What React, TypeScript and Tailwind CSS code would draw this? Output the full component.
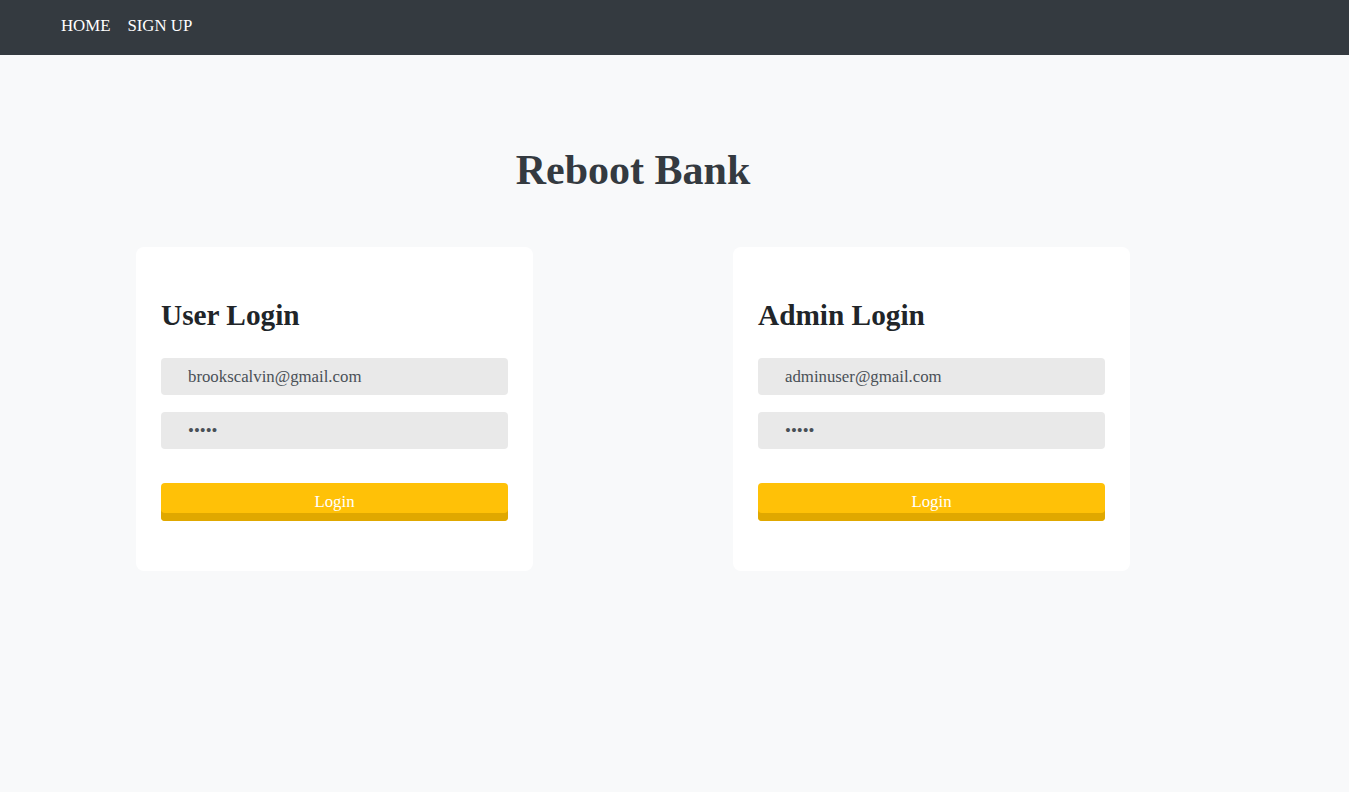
import React from "react";

const serif = { fontFamily: '"Liberation Serif", "Times New Roman", serif' };

function LoginCard({ title, email }: { title: string; email: string }) {
  return (
    <div className="w-[397px] bg-white rounded-[8px] px-[25px] pt-[51px] pb-[50px]">
      <h3 className="text-[29.3px] leading-[1.2] font-bold text-[#212529] m-0">{title}</h3>
      <div className="mt-[24px] flex flex-col">
        <input
          readOnly
          type="text"
          defaultValue={email}
          className="h-[37px] w-full rounded-[4px] bg-[#e9e9e9] pl-[27px] pt-[1px] text-[16.8px] text-[#495057] outline-none border-0"
          style={serif}
        />
        <input
          readOnly
          type="password"
          defaultValue="12345"
          className="mt-[17px] h-[37px] w-full rounded-[4px] bg-[#e9e9e9] pl-[27px] pt-[1px] text-[16.8px] text-[#495057] outline-none border-0"
          style={serif}
        />
        <button
          className="mt-[34px] h-[38px] w-full rounded-[4px] bg-[#ffc107] text-white text-[16.8px] shadow-[inset_0_-8px_0_#e0a800]"
          style={serif}
        >
          Login
        </button>
      </div>
    </div>
  );
}

export default function App() {
  return (
    <div className="min-h-[792px] bg-[#f8f9fa]" style={serif}>
      <nav className="h-[55px] bg-[#343a40] flex items-center pl-[61px] pb-[4px] gap-[17px] text-white text-[16.8px]">
        <span>HOME</span>
        <span>SIGN UP</span>
      </nav>
      <div className="ml-[136px] w-[994px] pt-[90px]">
        <h1 className="text-center text-[42px] leading-[1.2] font-bold text-[#343a40] m-0">Reboot Bank</h1>
        <div className="mt-[52px] flex justify-between">
          <LoginCard title="User Login" email="brookscalvin@gmail.com" />
          <LoginCard title="Admin Login" email="adminuser@gmail.com" />
        </div>
      </div>
    </div>
  );
}
